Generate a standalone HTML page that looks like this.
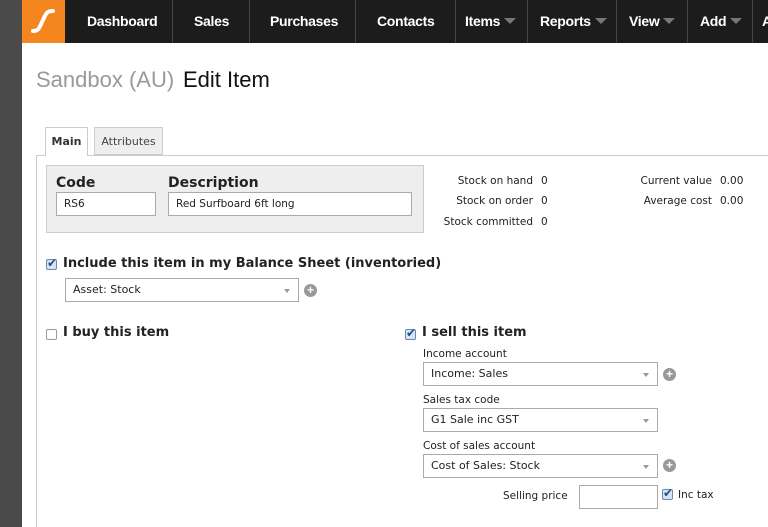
<!DOCTYPE html>
<html><head><meta charset="utf-8"><style>
*{margin:0;padding:0;box-sizing:border-box}
body{width:768px;height:527px;overflow:hidden;background:#fff;position:relative;font-family:"DejaVu Sans","Liberation Sans",sans-serif;color:#222}
.a{position:absolute}
#side{left:0;top:0;width:22px;height:527px;background:#4a4a4a}
#nav{left:22px;top:0;width:746px;height:43px;background:#1c1c1c}
#logo{left:22px;top:0;width:43px;height:43px;background:#f5861f}
.ni{position:absolute;top:0;height:43px;color:#fff;font:bold 14px "Liberation Sans",sans-serif;line-height:43px;letter-spacing:-0.3px}
.sep{position:absolute;top:0;width:1px;height:43px;background:#444}
.tri{display:inline-block;width:0;height:0;border-left:6px solid transparent;border-right:6px solid transparent;border-top:6px solid #777;margin-left:4px;vertical-align:2px}
.box{position:absolute;border:1px solid #aaa;background:#fff;font-size:10.5px;padding-left:7px;line-height:22px}
.sel{position:absolute;border:1px solid #aaa;background:#fff;font-size:11px;padding-left:7px;line-height:22px;height:24px}
.sel:after{content:"";position:absolute;right:8px;top:10px;border-left:3px solid transparent;border-right:3px solid transparent;border-top:4px solid #999}
.plus{position:absolute;width:13px;height:13px;border-radius:50%;background:#999;color:#fff;font:bold 12px "Liberation Sans",sans-serif;line-height:13px;text-align:center}
.cb{position:absolute;width:11px;height:11px;border:1px solid #999;border-radius:2px;background:#fff}
.chk{background:#d8e4f3;border-color:#6a8ab0}
.chk:after{content:"✔";position:absolute;left:0px;top:-4px;font-size:12px;color:#1d4f8c}
.h{position:absolute;font-weight:bold;font-size:13px;color:#222}
.r{position:absolute;font-size:10.5px;color:#222;text-align:right}
.s{position:absolute;font-size:10.5px}
</style></head><body>
<div class="a" id="side"></div>
<div class="a" id="nav"></div>
<div class="a" id="logo"><svg width="43" height="43"><path d="M31 11 C24 11 24 14 20 22 C17 29 16 31 11 31" stroke="#fff" stroke-width="4" fill="none" stroke-linecap="round"/></svg></div>
<div class="ni" style="left:87px">Dashboard</div>
<div class="sep" style="left:172px"></div>
<div class="ni" style="left:194px">Sales</div>
<div class="sep" style="left:249px"></div>
<div class="ni" style="left:270px">Purchases</div>
<div class="sep" style="left:355px"></div>
<div class="ni" style="left:377px">Contacts</div>
<div class="sep" style="left:455px"></div>
<div class="ni" style="left:465px">Items<span class="tri"></span></div>
<div class="sep" style="left:527px"></div>
<div class="ni" style="left:540px">Reports<span class="tri"></span></div>
<div class="sep" style="left:616px"></div>
<div class="ni" style="left:629px">View<span class="tri"></span></div>
<div class="sep" style="left:687px"></div>
<div class="ni" style="left:700px">Add<span class="tri"></span></div>
<div class="sep" style="left:752px"></div>
<div class="ni" style="left:762px">A</div>

<div class="a" style="left:36px;top:67px;font:22px 'Liberation Sans',sans-serif;color:#999">Sandbox (AU)</div>
<div class="a" style="left:183px;top:67px;font:22px 'Liberation Sans',sans-serif;color:#111">Edit Item</div>

<div class="a" style="left:36px;top:155px;width:740px;height:1px;background:#ccc"></div>
<div class="a" style="left:36px;top:155px;width:1px;height:372px;background:#ccc"></div>
<div class="a" style="left:45px;top:127px;width:43px;height:29px;border:1px solid #ccc;border-bottom:none;background:#fff;font-size:11px;font-weight:bold;color:#333;text-align:center;line-height:28px">Main</div>
<div class="a" style="left:94px;top:127px;width:69px;height:28px;border:1px solid #ccc;background:#eee;font-size:11px;color:#444;text-align:center;line-height:28px">Attributes</div>

<div class="a" style="left:46px;top:165px;width:378px;height:68px;background:#eee;border:1px solid #ccc"></div>
<div class="h" style="left:56px;top:175px;font-size:14px">Code</div>
<div class="h" style="left:168px;top:175px;font-size:14px">Description</div>
<div class="box" style="left:56px;top:192px;width:100px;height:24px">RS6</div>
<div class="box" style="left:168px;top:192px;width:244px;height:24px">Red Surfboard 6ft long</div>

<div class="r" style="left:420px;top:175px;width:113px">Stock on hand</div><div class="r" style="left:541px;top:175px">0</div>
<div class="r" style="left:420px;top:195px;width:113px">Stock on order</div><div class="r" style="left:541px;top:195px">0</div>
<div class="r" style="left:420px;top:216px;width:113px">Stock committed</div><div class="r" style="left:541px;top:216px">0</div>
<div class="r" style="left:600px;top:175px;width:112px">Current value</div><div class="r" style="left:720px;top:175px">0.00</div>
<div class="r" style="left:600px;top:195px;width:112px">Average cost</div><div class="r" style="left:720px;top:195px">0.00</div>

<div class="cb chk" style="left:46px;top:259px"></div>
<div class="h" style="left:63px;top:256px">Include this item in my Balance Sheet (inventoried)</div>
<div class="sel" style="left:65px;top:278px;width:234px">Asset: Stock</div>
<div class="plus" style="left:304px;top:284px">+</div>

<div class="cb" style="left:46px;top:329px"></div>
<div class="h" style="left:63px;top:325px">I buy this item</div>

<div class="cb chk" style="left:405px;top:329px"></div>
<div class="h" style="left:422px;top:325px">I sell this item</div>
<div class="s" style="left:423px;top:348px">Income account</div>
<div class="sel" style="left:423px;top:362px;width:235px">Income: Sales</div>
<div class="plus" style="left:663px;top:368px">+</div>
<div class="s" style="left:423px;top:394px">Sales tax code</div>
<div class="sel" style="left:423px;top:408px;width:235px">G1 Sale inc GST</div>
<div class="s" style="left:423px;top:440px">Cost of sales account</div>
<div class="sel" style="left:423px;top:454px;width:235px">Cost of Sales: Stock</div>
<div class="plus" style="left:663px;top:459px">+</div>
<div class="s" style="left:503px;top:490px">Selling price</div>
<div class="box" style="left:579px;top:485px;width:79px;height:24px"></div>
<div class="cb chk" style="left:662px;top:489px"></div>
<div class="s" style="left:678px;top:489px">Inc tax</div>
</body></html>
